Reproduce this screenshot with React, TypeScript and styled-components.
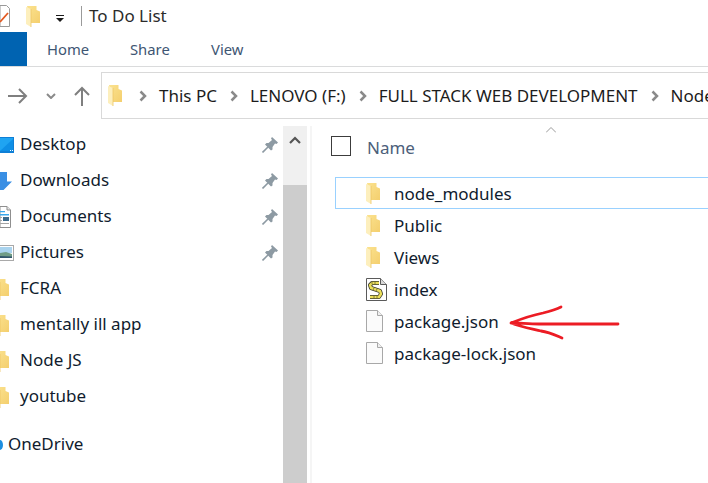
import React, { useId } from 'react';
import styled, { createGlobalStyle } from 'styled-components';

const GlobalStyle = createGlobalStyle`
  html, body {
    margin: 0;
    background: #fff;
    overflow: hidden;
  }
  #root {
    width: 708px;
    height: 483px;
  }
`;

const FolderIcon = ({ width = 14 }: { width?: number }) => {
  const id = useId();
  return (
    <svg width={width} height="21" viewBox={`${14 - width} 0 ${width} 21`} fill="none">
      <defs>
        <linearGradient id={id} x1="0" y1="0" x2="1" y2="1">
          <stop offset="0" stopColor="#fbe28f" />
          <stop offset="1" stopColor="#f4cf6e" />
        </linearGradient>
      </defs>
      <path d="M1 0h9.500v4l3.500 1.500V17H4z" fill={`url(#${id})`} />
      <path d="M0 1l5 2v18l-5-3z" fill="#fdefbd" />
      <path d="M5 3v18" stroke="#eec766" strokeWidth=".8" />
    </svg>
  );
};

const PinIcon = () => (
  <svg width="16" height="16" viewBox="0 0 16 16" fill="#8d9aa3">
    <path d="M10 0l6 5.500L14.500 7 13 6.500 10.500 10v2.500L9 13.500 3 7.500 4.500 6h2L10 3 9 1.500z" />
    <path d="M.5 15.500 6 10" stroke="#8d9aa3" strokeWidth="1.600" />
  </svg>
);

const DesktopIcon = () => (
  <svg width="14" height="16" viewBox="0 0 14 16">
    <path d="M0 0h14v16H0z" fill="#0f7fd6" />
    <path d="M0 1h13v13H0z" fill="#1fa4f2" />
    <path d="M0 14 13 2v12z" fill="#0e8fe6" />
    <path d="M10 13h1v1h-1zM12 13h1v1h-1z" fill="#fff" />
  </svg>
);

const DownloadIcon = () => (
  <svg width="12" height="18" viewBox="0 0 12 18">
    <path d="M0 0h7v9.500h5L3.500 18H0z" fill="#3a8fe4" />
  </svg>
);

const DocumentsIcon = () => (
  <svg width="11" height="22" viewBox="0 0 11 22">
    <path d="M0 .5h7l3.500 3.500v17.500H0z" fill="#fff" stroke="#8f8f8f" />
    <path d="M7 .5V4h3.500" fill="#e8e8e8" stroke="#8f8f8f" />
    <path d="M0 5h5v1.200H0zM0 8h9v1.500H0z" fill="#3aa8ec" />
    <path d="M3 11h6v4H3z" fill="#3b6a8c" />
    <path d="M0 11h2v1H0zM0 14h2v1H0zM0 17h9v1H0z" fill="#a5a5a5" />
  </svg>
);

const PicturesIcon = () => (
  <svg width="14" height="16" viewBox="0 0 14 16">
    <path d="M0 0h14v16H0z" fill="#a9a9a9" />
    <path d="M0 1h13v14H0z" fill="#fff" />
    <path d="M0 2h12v6H0z" fill="#a9d3ee" />
    <path d="M0 8l6-1 6 2v4H0z" fill="#6f9c86" />
    <path d="M0 11l12 .5V13H0z" fill="#32566c" />
  </svg>
);

const OneDriveIcon = () => (
  <svg width="3" height="10" viewBox="0 0 3 10">
    <path d="M0 0a3 5 0 0 1 0 10z" fill="#1e8fe0" />
  </svg>
);

const ScriptIcon = () => (
  <svg width="21" height="23" viewBox="0 0 21 23">
    <path d="M.5.500h14l6 6v16H.5z" fill="#fff" stroke="#5a5a5a" />
    <path d="M14.500.500v6h6" fill="#d8d8d8" stroke="#5a5a5a" />
    <path d="M13 5H6L4 7l1 3 9 3 1 3-2 3H4" fill="none" stroke="#3a3a2a" strokeWidth="4" strokeLinejoin="round" />
    <path d="M13 5H6L4 7l1 3 9 3 1 3-2 3H4" fill="none" stroke="#ece05a" strokeWidth="2.400" strokeLinejoin="round" />
    <path d="M6 4v2M9 4v2M8 10l-1 2M11 11l-1 2M8 18v2M11 18v2" stroke="#6a6a3a" strokeWidth=".8" />
  </svg>
);

const BlankFileIcon = () => (
  <svg width="17" height="22" viewBox="0 0 17 22">
    <path d="M.5.500h11l5 5v16H.5z" fill="#fbfbfb" stroke="#a8a8a8" />
    <path d="M11.500.500v5h5" fill="#f0f0f0" stroke="#a8a8a8" />
  </svg>
);

const Chevron = () => (
  <ChevronMark width="8" height="12" viewBox="0 0 8 12" fill="none">
    <path d="M1.500 1.500 6 6l-4.500 4.500" stroke="#8a8a8a" strokeWidth="2.500" />
  </ChevronMark>
);

const ChevronMark = styled.svg`
  flex: none;
`;

const Page = styled.div`
  position: relative;
  width: 708px;
  height: 483px;
  overflow: hidden;
  background: #fff;
  color: #1a1a1a;
  font-family: 'Noto Sans', 'Open Sans', sans-serif;
  font-size: 17px;
`;

const TitleBar = styled.div`
  height: 32px;
  display: flex;
  align-items: center;
`;

const QuickAccess = styled.div`
  display: flex;
  align-items: center;
  width: 81px;
  height: 22px;
`;

const NotePad = styled.svg`
  margin-right: 16px;
`;

const DropMark = styled.svg`
  margin-left: 16px;
  margin-top: 5px;
`;

const TitleText = styled.div`
  border-left: 1px solid #9a9a9a;
  height: 20px;
  box-sizing: border-box;
  padding: 0 0 2px 7px;
  font-size: 17px;
  color: #2b2b2b;
  display: flex;
  align-items: center;
`;

const Ribbon = styled.div`
  height: 34px;
  display: flex;
  align-items: stretch;
  border-bottom: 1px solid #dadbdc;
`;

const FileTab = styled.div`
  width: 27px;
  background: #0063b1;
`;

const RibbonTabs = styled.div`
  display: flex;
  padding-left: 20px;
`;

const RibbonTab = styled.div<{ $width: number }>`
  width: ${p => p.$width}px;
  padding-top: 7px;
  font-size: 14.800px;
  line-height: 20px;
  color: #3e5673;
`;

const NavRow = styled.div`
  height: 59px;
  box-sizing: border-box;
  padding: 5px 0 7px 8px;
  display: flex;
  align-items: flex-start;
`;

const NavButtons = styled.div`
  width: 93px;
  height: 47px;
  display: flex;
  align-items: center;
  flex: none;
`;

const NavDown = styled.svg`
  margin-left: 18px;
`;

const NavUp = styled.svg`
  margin-left: 18px;
`;

const AddressBox = styled.div`
  flex: 1;
  min-width: 0;
  height: 47px;
  box-sizing: border-box;
  border: 1px solid #d9d9d9;
  border-right: none;
  display: flex;
  align-items: center;
  padding-left: 6px;
  white-space: nowrap;
  overflow: hidden;
`;

const Crumb = styled.span`
  flex: none;
  margin: 0 13px 0 12px;
  line-height: 24px;
  color: #1c1c1c;
  font-size: 17px;
`;

const CrumbFolder = styled.span`
  display: flex;
  flex: none;
  margin-right: 17px;
`;

const Content = styled.div`
  display: flex;
  height: 358px;
`;

const Sidebar = styled.div`
  width: 283px;
  flex: none;
  padding-top: 1px;
  box-sizing: border-box;
`;

const NavItem = styled.div<{ $gap?: number }>`
  height: 36px;
  display: flex;
  align-items: center;
  margin-top: ${p => p.$gap ?? 0}px;
  padding-right: 5px;
`;

const NavIconSlot = styled.div<{ $width?: number }>`
  width: ${p => p.$width ?? 20}px;
  flex: none;
  display: flex;
  align-items: center;
`;

const NavLabel = styled.span`
  flex: 1;
  line-height: 24px;
  margin-bottom: 2px;
  color: #101c2e;
  font-size: 17px;
`;

const ScrollTrack = styled.div`
  width: 24px;
  flex: none;
  background: #cdcdcd;
  display: flex;
  flex-direction: column;
`;

const ScrollButton = styled.div`
  height: 59px;
  background: #f0f0f0;
  display: flex;
  justify-content: center;
  padding-top: 10px;
  box-sizing: border-box;
`;

const Splitter = styled.div`
  width: 2px;
  margin-left: 3px;
  flex: none;
  background: #f5f5f5;
`;

const FileArea = styled.div`
  flex: 1;
  padding-left: 19px;
  position: relative;
  min-width: 0;
`;

const SortMark = styled.svg`
  position: absolute;
  left: 234px;
  top: 1px;
`;

const HeaderRow = styled.div`
  height: 51px;
  display: flex;
  align-items: flex-start;
  padding-top: 10px;
  box-sizing: border-box;
`;

const CheckBox = styled.div`
  width: 20px;
  height: 20px;
  box-sizing: border-box;
  border: 1px solid #3c3c3c;
  flex: none;
`;

const ColumnName = styled.div`
  margin-left: 16px;
  line-height: 24px;
  color: #4c607a;
  font-size: 17px;
`;

const FileList = styled.div`
  display: flex;
  flex-direction: column;
  margin-left: 4px;
`;

const FileRow = styled.div<{ $selected?: boolean }>`
  height: 32px;
  box-sizing: border-box;
  display: flex;
  align-items: center;
  border: 1px solid ${p => (p.$selected ? '#99d1ff' : 'transparent')};
  border-right: none;
`;

const FileIconSlot = styled.div`
  width: 58px;
  padding-left: 30px;
  box-sizing: border-box;
  flex: none;
  display: flex;
  align-items: center;
`;

const FileName = styled.span`
  line-height: 24px;
  margin-top: 2px;
  color: #101c2e;
  font-size: 17px;
`;

const Annotation = styled.svg`
  position: absolute;
  left: 505px;
  top: 300px;
`;

const pinned = [
  { label: 'Desktop', icon: <DesktopIcon /> },
  { label: 'Downloads', icon: <DownloadIcon /> },
  { label: 'Documents', icon: <DocumentsIcon /> },
  { label: 'Pictures', icon: <PicturesIcon /> },
];

const folders = ['FCRA', 'mentally ill app', 'Node JS', 'youtube'];

const files = [
  { name: 'node_modules', icon: <FolderIcon />, selected: true },
  { name: 'Public', icon: <FolderIcon /> },
  { name: 'Views', icon: <FolderIcon /> },
  { name: 'index', icon: <ScriptIcon /> },
  { name: 'package.json', icon: <BlankFileIcon /> },
  { name: 'package-lock.json', icon: <BlankFileIcon /> },
];

const crumbs = ['This PC', 'LENOVO (F:)', 'FULL STACK WEB DEVELOPMENT', 'Node JS'];

export default function App() {
  return (
    <Page>
      <GlobalStyle />
      <TitleBar>
        <QuickAccess>
          <NotePad width="10" height="22" viewBox="0 0 10 22">
            <path d="M0 .5h6.500l3 3V21.500H0z" fill="#fff" stroke="#9a9a9a" />
            <path d="M0 17 8 8" stroke="#e2571e" strokeWidth="1.800" />
          </NotePad>
          <FolderIcon />
          <DropMark width="8" height="7" viewBox="0 0 8 7">
            <path d="M0 0h8v1H0zM0 3h8L4 7z" fill="#1a1a1a" />
          </DropMark>
        </QuickAccess>
        <TitleText>To Do List</TitleText>
      </TitleBar>
      <Ribbon>
        <FileTab />
        <RibbonTabs>
          <RibbonTab $width={83}>Home</RibbonTab>
          <RibbonTab $width={81}>Share</RibbonTab>
          <RibbonTab $width={60}>View</RibbonTab>
        </RibbonTabs>
      </Ribbon>
      <NavRow>
        <NavButtons>
          <svg width="20" height="16" viewBox="0 0 20 16" fill="none">
            <path d="M0 8h18M11 1l7 7-7 7" stroke="#7f7f7f" strokeWidth="2" />
          </svg>
          <NavDown width="10" height="6" viewBox="0 0 10 6" fill="none">
            <path d="M1 1l4 4 4-4" stroke="#8a8a8a" strokeWidth="2" />
          </NavDown>
          <NavUp width="16" height="20" viewBox="0 0 16 20" fill="none">
            <path d="M8 20V2M1 9l7-7 7 7" stroke="#7f7f7f" strokeWidth="2" />
          </NavUp>
        </NavButtons>
        <AddressBox>
          <CrumbFolder>
            <FolderIcon />
          </CrumbFolder>
          {crumbs.map(crumb => (
            <React.Fragment key={crumb}>
              <Chevron />
              <Crumb>{crumb}</Crumb>
            </React.Fragment>
          ))}
        </AddressBox>
      </NavRow>
      <Content>
        <Sidebar>
          {pinned.map(item => (
            <NavItem key={item.label}>
              <NavIconSlot>{item.icon}</NavIconSlot>
              <NavLabel>{item.label}</NavLabel>
              <PinIcon />
            </NavItem>
          ))}
          {folders.map(label => (
            <NavItem key={label}>
              <NavIconSlot>
                <FolderIcon width={9} />
              </NavIconSlot>
              <NavLabel>{label}</NavLabel>
            </NavItem>
          ))}
          <NavItem $gap={12}>
            <NavIconSlot $width={8}>
              <OneDriveIcon />
            </NavIconSlot>
            <NavLabel>OneDrive</NavLabel>
          </NavItem>
        </Sidebar>
        <ScrollTrack>
          <ScrollButton>
            <svg width="12" height="8" viewBox="0 0 12 8" fill="none">
              <path d="M1 7l5-5 5 5" stroke="#555" strokeWidth="2.200" />
            </svg>
          </ScrollButton>
        </ScrollTrack>
        <Splitter />
        <FileArea>
          <SortMark width="10" height="6" viewBox="0 0 10 6" fill="none">
            <path d="M0 5.500 5 .5l5 5" stroke="#9a9a9a" />
          </SortMark>
          <HeaderRow>
            <CheckBox />
            <ColumnName>Name</ColumnName>
          </HeaderRow>
          <FileList>
            {files.map(file => (
              <FileRow key={file.name} $selected={file.selected}>
                <FileIconSlot>{file.icon}</FileIconSlot>
                <FileName>{file.name}</FileName>
              </FileRow>
            ))}
          </FileList>
        </FileArea>
      </Content>
      <Annotation width="120" height="45" viewBox="0 0 120 45" fill="none">
        <path
          d="M113 24H34C24 24 14 23 6 23C16 19 28 15 38 13C46 11 50 10 56 7M6 23C16 27 28 29 36 31C44 32 50 35 57 38"
          stroke="#ec1c24"
          strokeWidth="2.800"
          strokeLinecap="round"
          strokeLinejoin="round"
        />
      </Annotation>
    </Page>
  );
}
